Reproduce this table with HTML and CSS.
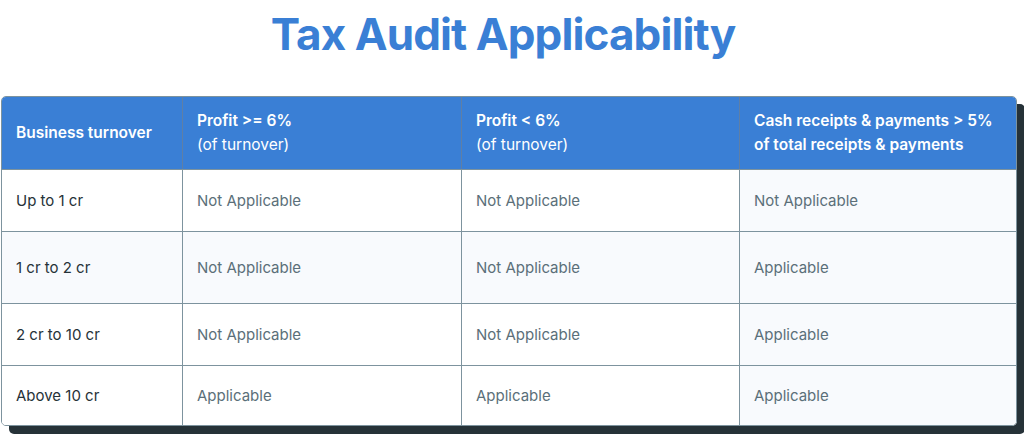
FILE: index.html
```html
<!DOCTYPE html>
<html>
<head>
<meta charset="utf-8">
<link rel="stylesheet" href="styles.css">
</head>
<body>
<h1 class="title">Tax Audit Applicability</h1>
<div class="table">
  <div class="cell head first">Business turnover</div>
  <div class="cell head">Profit &gt;= 6%<br><span class="light">(of turnover)</span></div>
  <div class="cell head">Profit &lt; 6%<br><span class="light">(of turnover)</span></div>
  <div class="cell head">Cash receipts &amp; payments &gt; 5%<br>of total receipts &amp; payments</div>

  <div class="cell first r1">Up to 1 cr</div>
  <div class="cell r1">Not Applicable</div>
  <div class="cell r1">Not Applicable</div>
  <div class="cell r1 last">Not Applicable</div>

  <div class="cell first r2 alt">1 cr to 2 cr</div>
  <div class="cell r2 alt">Not Applicable</div>
  <div class="cell r2 alt">Not Applicable</div>
  <div class="cell r2 alt last">Applicable</div>

  <div class="cell first r3">2 cr to 10 cr</div>
  <div class="cell r3">Not Applicable</div>
  <div class="cell r3">Not Applicable</div>
  <div class="cell r3 last">Applicable</div>

  <div class="cell first r4">Above 10 cr</div>
  <div class="cell r4">Applicable</div>
  <div class="cell r4">Applicable</div>
  <div class="cell r4 last">Applicable</div>
</div>
</body>
</html>
```
FILE: styles.css
```css
html, body {
  margin: 0;
  padding: 0;
  background: #ffffff;
}
body {
  font-family: Inter, "Noto Sans", sans-serif;
  width: 1024px;
  height: 435px;
  overflow: hidden;
}
.title {
  margin: 0;
  padding-top: 7px;
  height: 96px;
  box-sizing: border-box;
  text-align: center;
  padding-right: 18px;
  font-size: 44px;
  line-height: 54px;
  font-weight: 700;
  letter-spacing: -0.9px;
  color: #3a7fd5;
}
.table {
  margin-left: 1px;
  width: 1016px;
  box-sizing: border-box;
  display: grid;
  grid-template-columns: 180px 279px 278px 1fr;
  grid-template-rows: 72px 62px 72px 62px 60px;
  border: 1px solid #7d939e;
  border-radius: 5px;
  overflow: hidden;
  box-shadow: 8px 8px 0 #263238;
}
.cell {
  display: flex;
  flex-direction: column;
  justify-content: center;
  padding: 0 14px;
  font-size: 15px;
  line-height: 24px;
  color: #5b6f79;
  background: #ffffff;
  border-left: 1px solid #7d939e;
  border-top: 1px solid #7d939e;
}
.cell.first {
  border-left: none;
  padding-left: 14px;
  color: #263238;
}
.cell.head {
  background: #3a7fd5;
  color: #ffffff;
  font-weight: 600;
  font-size: 15.5px;
  border-top: none;
  border-left-color: #5f7fa5;
  display: block;
  padding-top: 12px;
}
.cell.head.first {
  padding-top: 24px;
}
.cell.head .light {
  font-weight: 400;
}
.cell.alt, .cell.last {
  background: #f8fafd;
}
```
